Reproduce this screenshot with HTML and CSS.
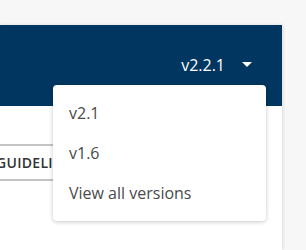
FILE: index.html
```html
<!DOCTYPE html>
<html>
<head>
<meta charset="utf-8">
<link rel="stylesheet" href="styles.css">
</head>
<body>
<div class="page">
  <div class="panel">
    <header class="header">
      <div class="version">
        <span class="version-label">v2.2.1</span>
        <svg class="caret" width="10" height="5" viewBox="0 0 10 5"><path d="M0 0H10L5 5Z" fill="#fff"/></svg>
      </div>
    </header>
    <div class="content">
      <button class="guide-btn">GUIDELINES</button>
    </div>
  </div>
  <div class="menu">
    <div class="menu-item">v2.1</div>
    <div class="menu-item">v1.6</div>
    <div class="menu-item">View all versions</div>
  </div>
</div>
</body>
</html>
```
FILE: styles.css
```css
html, body {
  margin: 0;
  padding: 0;
  background: #f7f7f7;
  font-family: "Open Sans", "Noto Sans", sans-serif;
  overflow: hidden;
}
.page {
  position: relative;
  width: 306px;
  height: 250px;
  padding-top: 25px;
  box-sizing: border-box;
}
.panel {
  width: 282px;
  height: 225px;
  background: #fff;
  box-shadow: 1px 0 3px rgba(0,0,0,0.12);
}
.header {
  height: 81px;
  background: #00365f;
  display: flex;
  justify-content: flex-end;
  align-items: center;
  padding-right: 30px;
  box-sizing: border-box;
}
.version {
  display: flex;
  align-items: center;
  gap: 17px;
  color: #fff;
  font-size: 16px;
  margin-top: -2px;
}
.caret {
  display: block;
}
.content {
  padding-top: 38px;
}
.guide-btn {
  display: block;
  margin-left: -18px;
  height: 37px;
  padding: 0 12px;
  border: 2px solid #c4c4c4;
  border-radius: 3px;
  background: #fff;
  font-family: "Open Sans", "Noto Sans", sans-serif;
  font-size: 14px;
  font-weight: 600;
  color: #333;
  letter-spacing: 0.3px;
}
.menu {
  position: absolute;
  left: 53px;
  top: 85px;
  width: 213px;
  padding: 8px 0;
  background: #fff;
  border-radius: 4px;
  box-shadow: 0 1px 4px rgba(0,0,0,0.22);
}
.menu-item {
  height: 40px;
  display: flex;
  align-items: center;
  padding-left: 16px;
  font-size: 16px;
  color: #4a4a4a;
}
```
